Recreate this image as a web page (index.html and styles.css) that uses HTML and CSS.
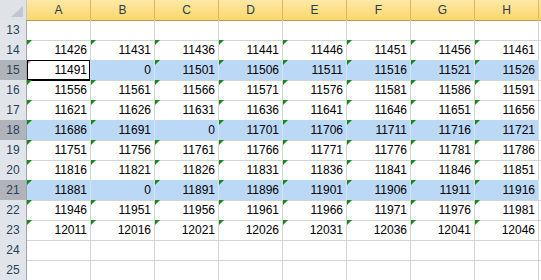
FILE: index.html
```html
<!DOCTYPE html>
<html>
<head>
    <meta charset="utf-8" />
    <title>Sheet1</title>
    <link rel="stylesheet" href="styles.css">
</head>
<body>
    <div class="sheet">
        <div class="row head">
            <div class="corner"><svg width="12" height="11" viewBox="0 0 12 11"><polygon points="12,0 12,11 0,11" fill="#c3c7cc" /></svg></div>
            <div class="ch">A</div><div class="ch">B</div><div class="ch">C</div><div class="ch">D</div>
            <div class="ch">E</div><div class="ch">F</div><div class="ch">G</div><div class="ch">H</div>
            <div class="ch rest"></div>
        </div>
        <div class="row">
            <div class="rh">13</div>
            <div class="c"></div><div class="c"></div><div class="c"></div><div class="c"></div>
            <div class="c"></div><div class="c"></div><div class="c"></div><div class="c"></div>
            <div class="c"></div>
        </div>
        <div class="row">
            <div class="rh">14</div>
            <div class="c t">11426</div><div class="c t">11431</div><div class="c t">11436</div><div class="c t">11441</div>
            <div class="c t">11446</div><div class="c t">11451</div><div class="c t">11456</div><div class="c t">11461</div>
            <div class="c"></div>
        </div>
        <div class="row sel">
            <div class="rh">15</div>
            <div class="c active">11491</div><div class="c">0</div><div class="c t">11501</div><div class="c t">11506</div>
            <div class="c t">11511</div><div class="c t">11516</div><div class="c t">11521</div><div class="c t">11526</div>
            <div class="c"></div>
        </div>
        <div class="row">
            <div class="rh">16</div>
            <div class="c t">11556</div><div class="c t">11561</div><div class="c t">11566</div><div class="c t">11571</div>
            <div class="c t">11576</div><div class="c t">11581</div><div class="c t">11586</div><div class="c t">11591</div>
            <div class="c"></div>
        </div>
        <div class="row">
            <div class="rh">17</div>
            <div class="c t">11621</div><div class="c t">11626</div><div class="c t">11631</div><div class="c t">11636</div>
            <div class="c t">11641</div><div class="c t">11646</div><div class="c t">11651</div><div class="c t">11656</div>
            <div class="c"></div>
        </div>
        <div class="row sel">
            <div class="rh">18</div>
            <div class="c t">11686</div><div class="c t">11691</div><div class="c">0</div><div class="c t">11701</div>
            <div class="c t">11706</div><div class="c t">11711</div><div class="c t">11716</div><div class="c t">11721</div>
            <div class="c"></div>
        </div>
        <div class="row">
            <div class="rh">19</div>
            <div class="c t">11751</div><div class="c t">11756</div><div class="c t">11761</div><div class="c t">11766</div>
            <div class="c t">11771</div><div class="c t">11776</div><div class="c t">11781</div><div class="c t">11786</div>
            <div class="c"></div>
        </div>
        <div class="row">
            <div class="rh">20</div>
            <div class="c t">11816</div><div class="c t">11821</div><div class="c t">11826</div><div class="c t">11831</div>
            <div class="c t">11836</div><div class="c t">11841</div><div class="c t">11846</div><div class="c t">11851</div>
            <div class="c"></div>
        </div>
        <div class="row sel">
            <div class="rh">21</div>
            <div class="c t">11881</div><div class="c">0</div><div class="c t">11891</div><div class="c t">11896</div>
            <div class="c t">11901</div><div class="c t">11906</div><div class="c t">11911</div><div class="c t">11916</div>
            <div class="c"></div>
        </div>
        <div class="row">
            <div class="rh">22</div>
            <div class="c t">11946</div><div class="c t">11951</div><div class="c t">11956</div><div class="c t">11961</div>
            <div class="c t">11966</div><div class="c t">11971</div><div class="c t">11976</div><div class="c t">11981</div>
            <div class="c"></div>
        </div>
        <div class="row">
            <div class="rh">23</div>
            <div class="c t">12011</div><div class="c t">12016</div><div class="c t">12021</div><div class="c t">12026</div>
            <div class="c t">12031</div><div class="c t">12036</div><div class="c t">12041</div><div class="c t">12046</div>
            <div class="c"></div>
        </div>
        <div class="row">
            <div class="rh">24</div>
            <div class="c"></div><div class="c"></div><div class="c"></div><div class="c"></div>
            <div class="c"></div><div class="c"></div><div class="c"></div><div class="c"></div>
            <div class="c"></div>
        </div>
        <div class="row">
            <div class="rh">25</div>
            <div class="c"></div><div class="c"></div><div class="c"></div><div class="c"></div>
            <div class="c"></div><div class="c"></div><div class="c"></div><div class="c"></div>
            <div class="c"></div>
        </div>
    </div>
</body>
</html>
```

FILE: styles.css
```css
* {
    padding: 0;
    margin: 0;
    box-sizing: border-box;
}

body {
    background: #fff;
    font-family: "Liberation Sans", Arial, sans-serif;
    font-size: 12px;
    color: #000;
    overflow: hidden;
}

.sheet {
    width: 541px;
    height: 280px;
}

.row {
    display: grid;
    grid-template-columns: 27px repeat(8, 64px) 1fr;
    height: 20px;
}

/* headers */
.corner {
    background: #dfe2e6;
    border-right: 1px solid #c3c7cc;
    border-bottom: 1px solid #9da3ab;
    display: flex;
    align-items: flex-end;
    justify-content: flex-end;
    padding: 0 3px 3px 0;
}

.ch {
    background: linear-gradient(#fde9a6, #fbd76c);
    border-right: 1px solid #e3b461;
    border-bottom: 1px solid #c29745;
    text-align: center;
    line-height: 19px;
    padding-top: 1px;
    color: #2d3a4b;
}

.ch.rest {
    border-right: none;
}

.rh {
    background: #e1e5ea;
    border-right: 1px solid #9da3ab;
    border-bottom: 1px solid #c6cad0;
    text-align: center;
    line-height: 19px;
    padding-top: 1px;
    color: #283f5c;
}

.sel .rh {
    background: #b0b4ba;
    border-bottom-color: #9ea2a8;
}

/* cells */
.c {
    position: relative;
    border-right: 1px solid #d4d4d4;
    border-bottom: 1px solid #d4d4d4;
    text-align: right;
    padding: 1px 3px 0 0;
    line-height: 19px;
}

.sel .c {
    background: #bbd8f7;
    border-right-color: #d3e2f2;
}

.sel .c:last-child {
    background: #fff;
    border-right: none;
}

.c:last-child {
    border-right: none;
}

/* number stored as text marker */
.t::before {
    content: "";
    position: absolute;
    left: 0;
    top: 0;
    border-top: 5px solid #148a14;
    border-right: 5px solid transparent;
}

.sel .c.active {
    background: #fff;
    box-shadow: inset 0 0 0 1px #000;
    border-bottom-color: #000;
}

.active::before {
    content: "";
    position: absolute;
    left: 1px;
    top: 1px;
    border-top: 3px solid #c77ac7;
    border-right: 3px solid transparent;
}
```
